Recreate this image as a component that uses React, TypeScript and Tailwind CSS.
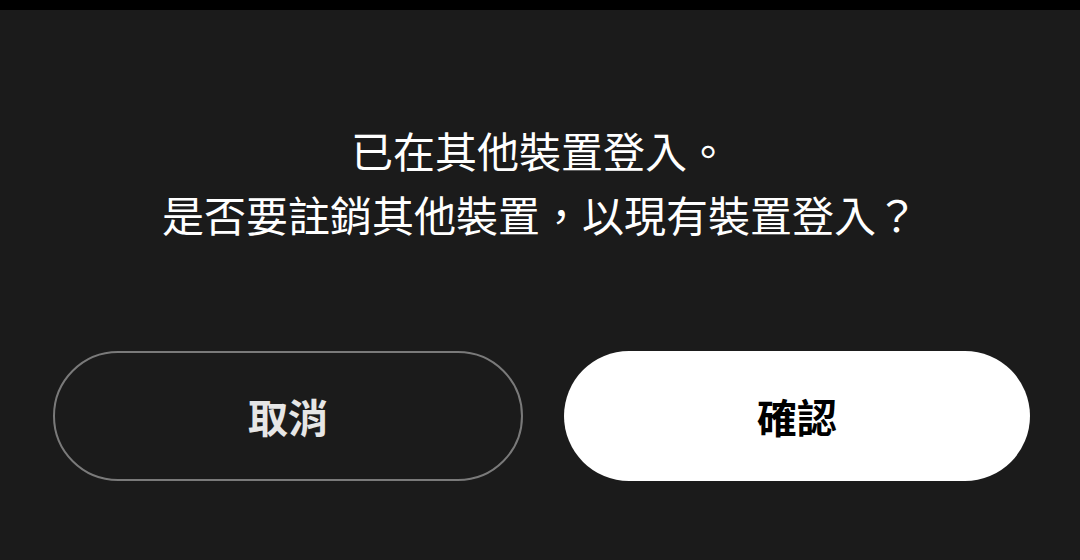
import React from 'react';

const App: React.FC = () => {
  return (
    <div
      className="w-[1080px] h-[560px] bg-[#1b1b1b] flex flex-col overflow-hidden"
      style={{ fontFamily: '"Noto Sans CJK TC", "Noto Sans", sans-serif' }}
    >
      {/* Status bar strip */}
      <div className="h-[10px] bg-black shrink-0" />

      {/* Message */}
      <div className="mt-[108px] text-center text-white text-[42px] leading-[64px]">
        <p>已在其他裝置登入。</p>
        <p>是否要註銷其他裝置，以現有裝置登入？</p>
      </div>

      {/* Actions */}
      <div className="mt-[105px] flex gap-[41px] pl-[53px] pr-[50px]">
        <button className="flex-1 h-[130px] rounded-full border-2 border-[#7a7a7a] text-[#e6e6e6] text-[40px] font-bold flex items-center justify-center">
          取消
        </button>
        <button className="flex-1 h-[130px] rounded-full bg-white text-black text-[40px] font-bold flex items-center justify-center">
          確認
        </button>
      </div>
    </div>
  );
};

export default App;
